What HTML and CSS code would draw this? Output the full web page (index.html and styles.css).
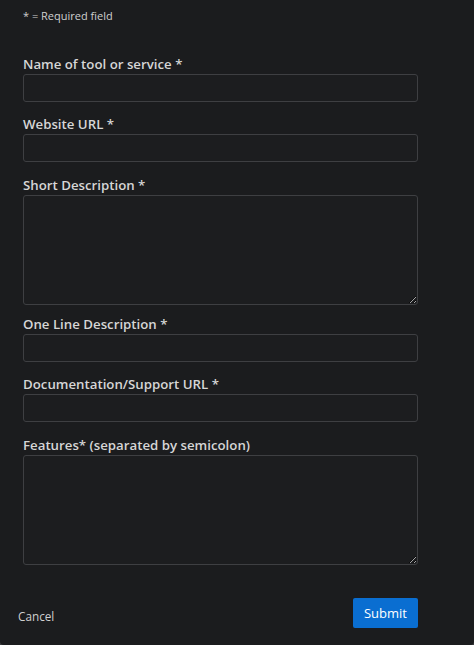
FILE: index.html
```html
<!DOCTYPE html>
<html lang="en">
<head>
<meta charset="utf-8">
<title>Submit a tool</title>
<link rel="stylesheet" href="styles.css">
</head>
<body>
<div class="modal">
  <form class="form">
    <p class="note">* = Required field</p>
    <div class="field">
      <label class="label" for="name">Name of tool or service *</label>
      <input class="input" id="name" type="text">
    </div>
    <div class="field">
      <label class="label" for="url">Website URL *</label>
      <input class="input" id="url" type="text">
    </div>
    <div class="field field-area">
      <label class="label" for="short">Short Description *</label>
      <textarea class="area" id="short"></textarea>
    </div>
    <div class="field">
      <label class="label" for="line">One Line Description *</label>
      <input class="input" id="line" type="text">
    </div>
    <div class="field">
      <label class="label" for="doc">Documentation/Support URL *</label>
      <input class="input" id="doc" type="text">
    </div>
    <div class="field field-area">
      <label class="label" for="features">Features* (separated by semicolon)</label>
      <textarea class="area" id="features"></textarea>
    </div>
    <div class="actions">
      <a class="cancel" href="#">Cancel</a>
      <button class="submit" type="button">Submit</button>
    </div>
  </form>
</div>
</body>
</html>
```

FILE: styles.css
```css
html {
  background: #3b3c3e;
}
body {
  margin: 0;
  font-family: "Open Sans", "Noto Sans", sans-serif;
  color: #d2d2d2;
}
.modal {
  background: #1b1c1e;
  height: 645px;
  border-radius: 0 0 4px 4px;
  box-sizing: border-box;
  padding: 0 56px 0 23px;
}
.form {
  display: flex;
  flex-direction: column;
}
.note {
  margin: 0;
  padding-top: 8px;
  font-size: 11px;
  line-height: 16px;
  color: #cfcfcf;
  height: 53.5px;
  box-sizing: border-box;
}
.field {
  display: flex;
  flex-direction: column;
  margin-bottom: 12.5px;
}
.field-area {
  margin-bottom: 9px;
}
.label {
  font-size: 13.25px;
  font-weight: 600;
  line-height: 20px;
  color: #d6d6d6;
}
.input,
.area {
  box-sizing: border-box;
  width: 395px;
  margin: 0;
  background: #1c1d1f;
  border: 1px solid #3e3f42;
  border-radius: 3px;
  color: #e0e0e0;
  font: inherit;
  font-size: 13px;
  outline: none;
}
.input {
  height: 28px;
  padding: 0 8px;
}
.area {
  height: 110px;
  padding: 6px 8px;
  resize: vertical;
  display: block;
}
.actions {
  display: flex;
  justify-content: space-between;
  align-items: center;
  margin-top: 24px;
  margin-left: -5px;
  width: 400px;
}
.cancel {
  color: #cfcfcf;
  text-decoration: none;
  font-size: 11.75px;
  margin-top: 6px;
}
.submit {
  width: 65px;
  height: 30px;
  background: #0a6ed1;
  color: #ffffff;
  border: none;
  border-radius: 2px;
  font-family: inherit;
  font-size: 13px;
  padding: 0;
}
```
